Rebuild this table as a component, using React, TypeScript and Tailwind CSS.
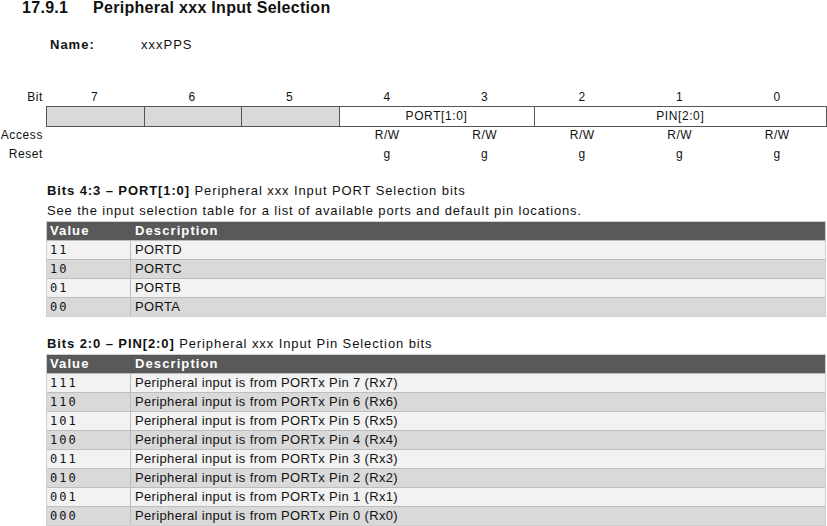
const portRows = [
  ["11", "PORTD"],
  ["10", "PORTC"],
  ["01", "PORTB"],
  ["00", "PORTA"],
];

const pinRows = [7, 6, 5, 4, 3, 2, 1, 0].map((n) => [
  n.toString(2).padStart(3, "0"),
  `Peripheral input is from PORTx Pin ${n} (Rx${n})`,
]);

function ValueTable({ rows }: { rows: string[][] }) {
  return (
    <div className="ml-[46px] w-[780px] border border-[#cfcfcf]">
      <div className="flex h-[18px] bg-[#595959] text-white font-bold text-[13px] leading-[18px] tracking-[1.1px]">
        <div className="w-[84px] pl-[3px]">Value</div>
        <div className="pl-[4px]">Description</div>
      </div>
      {rows.map(([v, d], i) => (
        <div
          key={v}
          className={`flex h-[19px] border-t border-[#bdbdbd] text-[13px] leading-[18px] ${
            i % 2 === 0 ? "bg-[#f2f2f2]" : "bg-[#d9d9d9]"
          }`}
        >
          <div className="w-[84px] pl-[3px] border-r border-[#bdbdbd] font-['DejaVu_Sans_Mono',monospace] text-[12px] tracking-[2px]">
            {v}
          </div>
          <div className="pl-[4px] tracking-[0.35px]">{d}</div>
        </div>
      ))}
    </div>
  );
}

export default function App() {
  const bits = [7, 6, 5, 4, 3, 2, 1, 0];
  return (
    <div className="w-[827px] h-[526px] overflow-hidden bg-white text-[#111] font-['Liberation_Sans',Arial,sans-serif]">
      <div className="flex h-[16px] text-[16px] font-bold leading-[15px] tracking-[0.3px]">
        <span className="ml-[22px] w-[71px]">17.9.1</span>
        <span>Peripheral xxx Input Selection</span>
      </div>

      <div className="flex mt-[21px] h-[16px] text-[13px] leading-[16px] tracking-[1px]">
        <span className="ml-[50px] w-[91px] font-bold">Name:</span>
        <span>xxxPPS</span>
      </div>

      <div className="mt-[36px] text-[12px] tracking-[0.6px]">
        <div className="flex h-[16px] leading-[16px]">
          <div className="w-[46px] pr-[3px] text-right">Bit</div>
          <div className="grid grid-cols-8 w-[780px] text-center">
            {bits.map((b) => (
              <div key={b}>{b}</div>
            ))}
          </div>
        </div>
        <div className="flex mt-[1px]">
          <div className="w-[46px]" />
          <div className="flex w-[781px] h-[21px] border border-[#555] text-center leading-[19px]">
            <div className="w-[97.5px] bg-[#d9d9d9] border-r border-[#555]" />
            <div className="w-[97.5px] bg-[#d9d9d9] border-r border-[#555]" />
            <div className="w-[97.5px] bg-[#d9d9d9] border-r border-[#555]" />
            <div className="w-[195px] border-r border-[#555]">PORT[1:0]</div>
            <div className="flex-1">PIN[2:0]</div>
          </div>
        </div>
        <div className="flex h-[16px] leading-[16px]">
          <div className="w-[46px] pr-[3px] text-right">Access</div>
          <div className="grid grid-cols-8 w-[780px] text-center">
            {bits.map((b) => (
              <div key={b}>{b < 5 ? "R/W" : ""}</div>
            ))}
          </div>
        </div>
        <div className="flex mt-[3px] h-[16px] leading-[16px]">
          <div className="w-[46px] pr-[3px] text-right">Reset</div>
          <div className="grid grid-cols-8 w-[780px] text-center">
            {bits.map((b) => (
              <div key={b}>{b < 5 ? "g" : ""}</div>
            ))}
          </div>
        </div>
      </div>

      <div className="mt-[21px] ml-[47px] h-[16px] text-[13px] leading-[16px] tracking-[0.9px] whitespace-nowrap">
        <span className="font-bold">Bits 4:3 – PORT[1:0]</span> Peripheral xxx Input PORT Selection bits
      </div>
      <div className="mt-[4px] ml-[47px] h-[16px] text-[13px] leading-[16px] tracking-[0.85px] whitespace-nowrap">
        See the input selection table for a list of available ports and default pin locations.
      </div>
      <div className="mt-[2px]">
        <ValueTable rows={portRows} />
      </div>

      <div className="mt-[19px] ml-[47px] h-[16px] text-[13px] leading-[16px] tracking-[0.9px] whitespace-nowrap">
        <span className="font-bold">Bits 2:0 – PIN[2:0]</span> Peripheral xxx Input Pin Selection bits
      </div>
      <div className="mt-[2px]">
        <ValueTable rows={pinRows} />
      </div>
    </div>
  );
}
